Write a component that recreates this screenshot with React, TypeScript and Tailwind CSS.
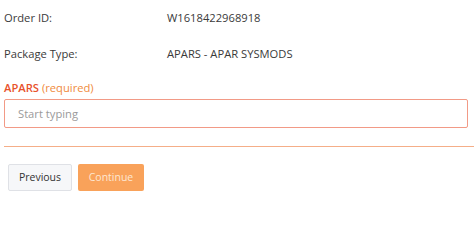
export default function App() {
  const rows = [
    { label: "Order ID:", value: "W1618422968918" },
    { label: "Package Type:", value: "APARS - APAR SYSMODS" },
  ];

  return (
    <div className="h-[204px] w-[474px] overflow-hidden bg-white font-['Open_Sans',sans-serif] text-[11.2px] text-[#3a3a3a]">
      <div className="pl-1">
        {rows.map((row) => (
          <div key={row.label} className="flex h-9 items-center">
            <span className="w-[163px]">{row.label}</span>
            <span>{row.value}</span>
          </div>
        ))}

        <div className="mt-[7px] flex h-[18px] items-center">
          <span className="font-semibold text-[#e8522b]">APARS</span>
          <span className="ml-[3px] text-[#f08a3c]">(required)</span>
        </div>

        <div className="mt-[2px] mr-[6px]">
          <input
            placeholder="Start typing"
            className="h-[29px] w-full rounded-[2px] border border-[#f29a86] px-[13px] text-[11.2px] text-[#333] outline-none placeholder:text-[#9a9a9a]"
          />
        </div>

        <div className="mt-[18px] h-px bg-[#f5ae88]" />

        <div className="mt-[17px] flex gap-[6px] pl-1">
          <button className="h-[27px] w-[64px] rounded-[2px] border border-[#dfe1e6] bg-[#f6f7f9] text-[10.5px] text-[#333]">
            Previous
          </button>
          <button className="h-[27px] w-[66px] rounded-[2px] bg-[#f9a25a] text-[10.5px] text-[#fde7d2]">
            Continue
          </button>
        </div>
      </div>
    </div>
  );
}
